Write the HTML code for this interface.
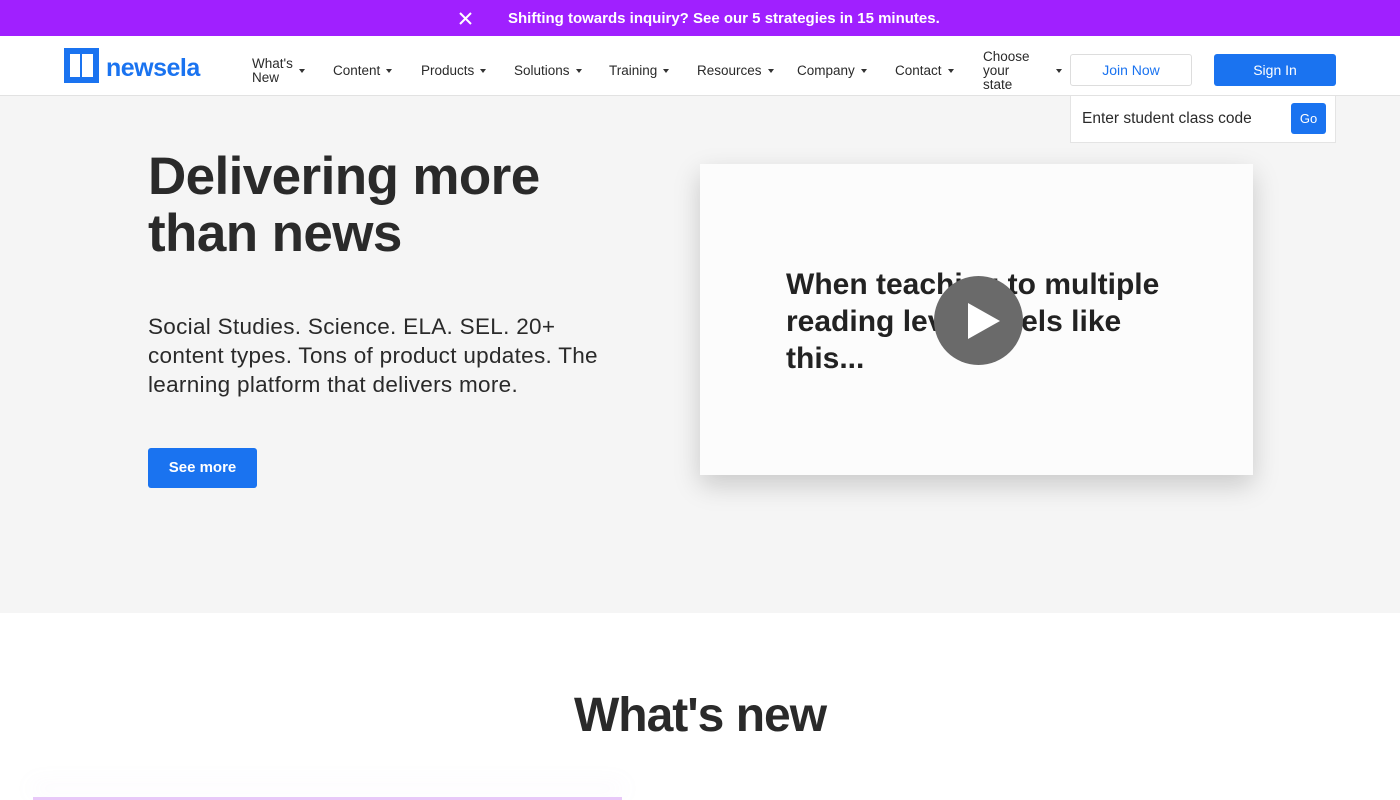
<!DOCTYPE html>
<html><head><meta charset="utf-8"><style>
*{margin:0;padding:0;box-sizing:border-box}
body{width:1400px;height:800px;overflow:hidden;font-family:"Liberation Sans",sans-serif;background:#fff;color:#2a2a2a;position:relative}
.banner{position:absolute;top:0;left:0;width:1400px;height:36px;background:#a020ff;color:#fff;font-weight:bold;font-size:15px}
.banner .t{position:absolute;left:508px;top:10px}
.banner .x{position:absolute;left:458px;top:11px}
.nav{position:absolute;top:36px;left:0;width:1400px;height:60px;background:#fff;border-bottom:1px solid #e2e2e2}
.logo{position:absolute;left:64px;top:12px;width:35px;height:35px;background:#1a73f0}
.logo:before{content:"";position:absolute;left:6px;top:6px;width:10px;height:23px;background:#fff}
.logo:after{content:"";position:absolute;left:18px;top:6px;width:11px;height:23px;background:#fff}
.lt{position:absolute;left:106px;top:18px;font-size:25px;font-weight:bold;color:#1a73f0;letter-spacing:-0.5px}
.ni{position:absolute;font-size:13.5px;color:#2a2a2a;line-height:14px}
.ni:after{content:"";position:absolute;right:-12px;top:50%;margin-top:-2px;border:3.5px solid transparent;border-top:4px solid #333;border-bottom:0}
.btn{position:absolute;border-radius:3px;font-size:14px;text-align:center}
.hero{position:absolute;top:96px;left:0;width:1400px;height:517px;background:#f5f5f5}
h1{position:absolute;left:148px;font-size:53px;line-height:57px;font-weight:bold;letter-spacing:-0.6px;color:#2a2a2a}
.sub{position:absolute;left:148px;font-size:22.5px;letter-spacing:0.3px;line-height:29px;color:#2a2a2a;white-space:nowrap}
.video{position:absolute;left:700px;width:553px;height:311px;background:#fcfcfc;box-shadow:0 10px 25px rgba(0,0,0,.18)}
.vt{position:absolute;left:86px;top:102px;font-size:30px;font-weight:bold;line-height:37px;color:#222}
.play{position:absolute;left:234px;top:112px;width:89px;height:89px;border-radius:50%;background:#6a6a6a}
.play:after{content:"";position:absolute;left:34px;top:27px;border-left:32px solid #fff;border-top:18px solid transparent;border-bottom:18px solid transparent}
</style></head><body>
<div class="banner"><svg class="x" width="15" height="15" viewBox="0 0 15 15"><path d="M2 2L13 13M13 2L2 13" stroke="#fff" stroke-width="2"/></svg><span class="t">Shifting towards inquiry? See our 5 strategies in 15 minutes.</span></div>
<div class="nav">
<div class="logo"></div><div class="lt">newsela</div>
<div class="ni" style="left:252px;top:21px">What's<br>New</div>
<div class="ni" style="left:333px;top:28px">Content</div>
<div class="ni" style="left:421px;top:28px">Products</div>
<div class="ni" style="left:514px;top:28px">Solutions</div>
<div class="ni" style="left:609px;top:28px">Training</div>
<div class="ni" style="left:697px;top:28px">Resources</div>
<div class="ni" style="left:797px;top:28px">Company</div>
<div class="ni" style="left:895px;top:28px">Contact</div>
<div class="ni" style="left:983px;top:14px;width:67px">Choose<br>your<br>state</div>
<div class="btn" style="left:1070px;top:18px;width:122px;height:32px;border:1px solid #ddd;color:#1a73f0;line-height:30px">Join Now</div>
<div class="btn" style="left:1214px;top:18px;width:122px;height:32px;background:#1a73f0;color:#fff;line-height:32px">Sign In</div>
</div>
<div class="hero">
<h1 style="top:52px">Delivering more<br>than news</h1>
<div class="sub" style="top:216px">Social Studies. Science. ELA. SEL. 20+<br>content types. Tons of product updates. The<br>learning platform that delivers more.</div>
<div class="btn" style="left:148px;top:352px;width:109px;height:40px;background:#1a73f0;color:#fff;line-height:40px;font-size:15px;font-weight:bold">See more</div>
<div class="video" style="top:68px"><div class="vt">When teaching to multiple<br>reading levels feels like<br>this...</div><div class="play"></div></div>
</div>
<div style="position:absolute;left:1070px;top:96px;width:266px;height:47px;background:#fff;border:1px solid #e4e4e4;border-top:0">
<span style="position:absolute;left:11px;top:14px;font-size:15.5px;color:#2a2a2a">Enter student class code</span>
<div class="btn" style="left:220px;top:7px;width:35px;height:31px;background:#1a73f0;color:#fff;line-height:31px;font-size:13px">Go</div></div>
<div style="position:absolute;left:0;top:688px;width:1400px;text-align:center;font-size:48px;font-weight:bold;color:#2a2a2a;letter-spacing:-1px">What's new</div>
<div style="position:absolute;left:33px;top:797px;width:589px;height:3px;background:#e8c8f8;box-shadow:0 -10px 20px rgba(200,180,230,.25)"></div>
</body></html>
